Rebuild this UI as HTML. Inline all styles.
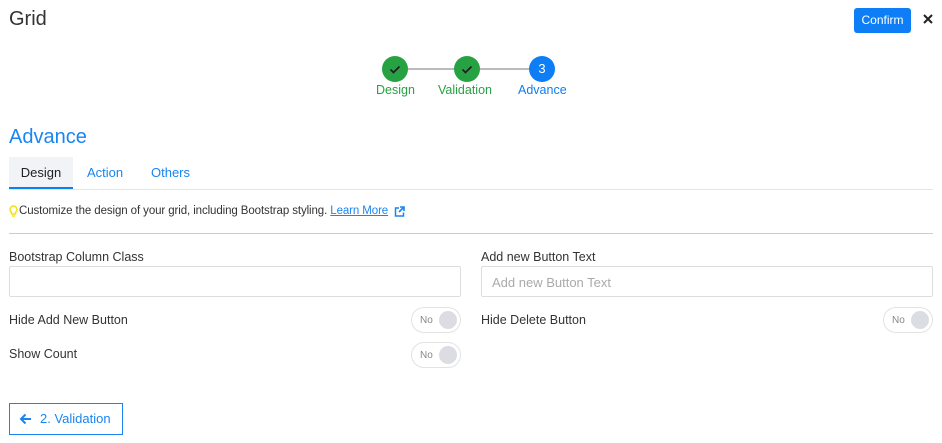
<!DOCTYPE html>
<html><head><style>
*{box-sizing:border-box;margin:0;padding:0}
body{width:942px;height:443px;background:#fff;font-family:"Liberation Sans",sans-serif;color:#333;position:relative;overflow:hidden}
.a{position:absolute;white-space:nowrap}
.toggle{position:absolute;width:50px;height:26px;border:1px solid #e3e3e3;border-radius:13px;background:#fff}
.toggle span{position:absolute;left:8px;top:7px;font-size:10px;color:#888}
.toggle i{position:absolute;right:3px;top:3px;width:18px;height:18px;border-radius:50%;background:#dcdde2}
.lbl{position:absolute;font-size:12.5px;color:#333;white-space:nowrap}
.inp{position:absolute;height:31px;border:1px solid #ddd;border-radius:2px}
.circ{position:absolute;width:26px;height:26px;border-radius:50%;top:56px}
</style></head><body>
<div class="a" style="left:9px;top:8px;font-size:20px;color:#333">Grid</div>
<div class="a" style="left:854px;top:8px;width:57px;height:25px;background:#0d7ef6;border-radius:3px;color:#fff;font-size:12px;line-height:25px;text-align:center">Confirm</div>
<svg class="a" style="left:922px;top:13px" width="12" height="12"><path d="M2 2L10 10M10 2L2 10" stroke="#222" stroke-width="2"/></svg>

<div class="a" style="left:395px;top:68px;width:146px;height:2px;background:#bbb"></div>
<div class="circ" style="left:382px;background:#27a243"><svg width="26" height="26"><path d="M8.5 13.5l3 3 6-6" stroke="#222" stroke-width="1.8" fill="none"/></svg></div>
<div class="circ" style="left:454px;background:#27a243"><svg width="26" height="26"><path d="M8.5 13.5l3 3 6-6" stroke="#222" stroke-width="1.8" fill="none"/></svg></div>
<div class="circ" style="left:529px;background:#0d7ef6;color:#fff;font-size:13px;text-align:center;line-height:26px">3</div>
<div class="a" style="left:376px;top:83px;font-size:12.5px;color:#27a243">Design</div>
<div class="a" style="left:438px;top:83px;font-size:12.5px;color:#27a243">Validation</div>
<div class="a" style="left:518px;top:83px;font-size:12.5px;color:#0d7ef6">Advance</div>

<div class="a" style="left:9px;top:126px;font-size:20px;color:#1a85f0">Advance</div>
<div class="a" style="left:9px;top:157px;width:64px;height:32px;background:#f1f3f6;border-bottom:2px solid #0d7ef6;font-size:13px;color:#222;text-align:center;line-height:32px">Design</div>
<div class="a" style="left:87px;top:165px;font-size:13px;color:#1a85f0">Action</div>
<div class="a" style="left:151px;top:165px;font-size:13px;color:#1a85f0">Others</div>
<div class="a" style="left:9px;top:189px;width:924px;height:1px;background:#e5e5e5"></div>
<svg class="a" style="left:9px;top:205px" width="9" height="13"><path d="M4.5 1a3.5 3.5 0 0 0-2 6.3V9h4V7.3A3.5 3.5 0 0 0 4.5 1z" fill="none" stroke="#f3e312" stroke-width="1.5"/><path d="M3 11h3" stroke="#f3e312" stroke-width="1.5"/></svg>
<div class="a" style="left:19px;top:205px;font-size:11.5px;color:#333;letter-spacing:-0.1px">Customize the design of your grid, including Bootstrap styling. <span style="color:#1a85f0;text-decoration:underline">Learn More</span></div>
<svg class="a" style="left:394px;top:206px" width="11" height="11"><path d="M5 2H1.5v8h8V6.5" fill="none" stroke="#1a85f0" stroke-width="1.5"/><path d="M6 1h4v4M10 1L5 6" fill="none" stroke="#1a85f0" stroke-width="1.6"/></svg>
<div class="a" style="left:9px;top:233px;width:924px;height:1px;background:#ccc"></div>

<div class="lbl" style="left:9px;top:250px">Bootstrap Column Class</div>
<div class="inp" style="left:9px;top:266px;width:452px"></div>
<div class="lbl" style="left:481px;top:250px">Add new Button Text</div>
<div class="inp" style="left:481px;top:266px;width:452px"><span style="position:absolute;left:10px;top:8px;font-size:13px;color:#aaa">Add new Button Text</span></div>

<div class="lbl" style="left:9px;top:313px">Hide Add New Button</div>
<div class="toggle" style="left:411px;top:307px"><span>No</span><i></i></div>
<div class="lbl" style="left:481px;top:313px">Hide Delete Button</div>
<div class="toggle" style="left:883px;top:307px"><span>No</span><i></i></div>
<div class="lbl" style="left:9px;top:347px">Show Count</div>
<div class="toggle" style="left:411px;top:342px"><span>No</span><i></i></div>

<div class="a" style="left:9px;top:403px;width:114px;height:32px;border:1px solid #1a85f0"></div>
<svg class="a" style="left:19px;top:413px" width="13" height="12"><path d="M12 6H2M6.5 1.5L2 6l4.5 4.5" fill="none" stroke="#1a85f0" stroke-width="2"/></svg>
<div class="a" style="left:40px;top:411px;font-size:13px;color:#1a85f0">2. Validation</div>
</body></html>
